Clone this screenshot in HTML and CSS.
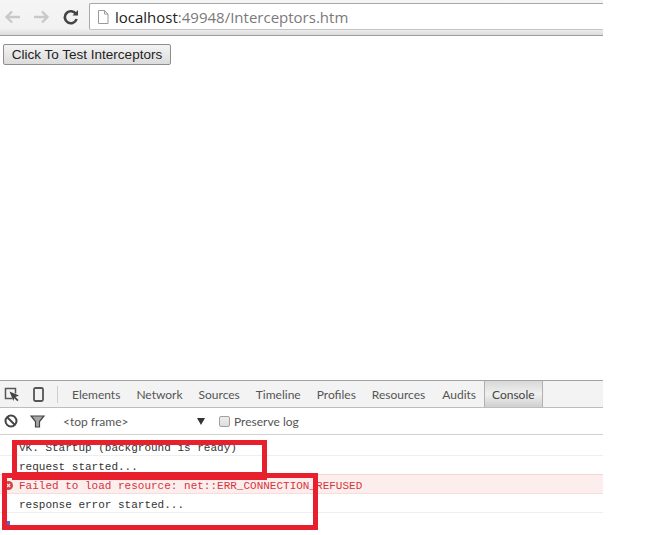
FILE: index.html
```html
<!DOCTYPE html>
<html lang="en">
<head>
<meta charset="utf-8">
<title>Interceptors</title>
<link rel="stylesheet" href="styles.css">
</head>
<body>
<div class="window">
  <header class="chrome">
    <svg class="nav" width="18" height="14" viewBox="0 0 18 14"><path d="M8 1.500 2.500 7 8 12.500M3 7h13" fill="none" stroke="#c9c9c9" stroke-width="2.400"/></svg>
    <svg class="nav" width="18" height="14" viewBox="0 0 18 14"><path d="M10 1.500 15.500 7 10 12.500M15 7H2" fill="none" stroke="#c9c9c9" stroke-width="2.400"/></svg>
    <svg class="nav reload" width="16" height="16" viewBox="0 0 16 16"><path d="M13 5.200A6 6 0 1 0 13.600 10" fill="none" stroke="#444" stroke-width="2.600"/><path d="M9.500 6.500H15V1z" fill="#444"/></svg>
    <div class="omnibox">
      <svg class="doc" width="12" height="14" viewBox="0 0 12 14"><path d="M1.500.5h6l3.500 3.500v9.500h-9.500zM7.500.5v3.500h3.500" fill="#fff" stroke="#9a9a9a"/></svg>
      <span class="url"><span class="host">localhost</span>:49948/Interceptors.htm</span>
    </div>
  </header>
  <main class="content">
    <button class="test-button" type="button">Click To Test Interceptors</button>
  </main>
  <section class="devtools">
    <div class="tabbar">
      <svg class="tool-icon" width="16" height="16" viewBox="0 0 16 16"><path d="M8 12.500H1.500v-10h10v5" fill="none" stroke="#555" stroke-width="1.500"/><path d="M5.500 5.500 15 9.500l-3.500 1.500 3 3-1.200 1.200-3-3L9.300 15z" fill="#444"/></svg>
      <svg class="tool-icon device" width="11" height="15" viewBox="0 0 11 15"><rect x="1" y="1" width="9" height="13" rx="1.500" fill="none" stroke="#555" stroke-width="1.800"/></svg>
      <span class="divider"></span>
      <nav class="tabs">
        <span class="tab">Elements</span>
        <span class="tab">Network</span>
        <span class="tab">Sources</span>
        <span class="tab">Timeline</span>
        <span class="tab">Profiles</span>
        <span class="tab">Resources</span>
        <span class="tab audits">Audits</span>
        <span class="tab active">Console</span>
      </nav>
    </div>
    <div class="filterbar">
      <svg class="clear" width="14" height="14" viewBox="0 0 14 14"><circle cx="7" cy="7" r="5.500" fill="none" stroke="#444" stroke-width="2"/><path d="M3 3l8 8" stroke="#444" stroke-width="2"/></svg>
      <svg class="filter" width="15" height="13" viewBox="0 0 15 13"><path d="M1 1h13L9.500 6.500V12h-4V6.500z" fill="#a6a6a6" stroke="#444" stroke-width="1.200"/></svg>
      <span class="frame">&lt;top frame&gt;</span>
      <span class="arrow"></span>
      <span class="check"></span>
      <span class="preserve">Preserve log</span>
    </div>
    <div class="console">
      <div class="row first">VK. Startup (background is ready)</div>
      <div class="row plain">request started...</div>
      <div class="row error">Failed to load resource: net::ERR_CONNECTION_REFUSED</div>
      <div class="row last">response error started...</div>
      <span class="prompt"></span>
    </div>
    <svg class="error-dot" width="9" height="9" viewBox="0 0 9 9"><circle cx="4.500" cy="4.500" r="4.500" fill="#d2433f"/><path d="M2.800 2.800l3.400 3.400M6.200 2.800 2.800 6.200" stroke="#fff" stroke-width="1.200"/></svg>
    <span class="mark mark-one"></span>
    <span class="mark mark-two"></span>
  </section>
</div>
</body>
</html>
```
FILE: styles.css
```css
html, body {
  margin: 0;
  padding: 0;
  background: #fff;
}
.window {
  width: 603px;
  height: 535px;
  display: flex;
  flex-direction: column;
  overflow: hidden;
}
.chrome {
  height: 36px;
  box-sizing: border-box;
  display: flex;
  align-items: center;
  padding: 0 0 2px 4px;
  background: linear-gradient(#f5f5f5, #f2f2f2 80%, #dcdcdc);
  border-bottom: 1px solid #9c9c9c;
}
.nav {
  margin-right: 10px;
  flex: none;
}
.nav + .nav + .reload {
  margin: 0 10px 0 3px;
}
.omnibox {
  flex: 1;
  height: 27px;
  box-sizing: border-box;
  display: flex;
  align-items: center;
  padding-left: 7px;
  background: #fff;
  border: 1px solid #a8a8a8;
  border-bottom-color: #c4c4c4;
  border-right: 0;
  border-radius: 2px 0 0 2px;
}
.doc {
  margin-right: 6px;
}
.url {
  font: 15px "Open Sans", sans-serif;
  color: #7a7a7a;
  white-space: nowrap;
}
.host {
  color: #222;
}
.content {
  flex: 1;
  padding: 8px 3px;
}
.test-button {
  display: block;
  width: 168px;
  height: 21px;
  padding: 0;
  font: 13.500px "Liberation Sans", sans-serif;
  color: #222;
  background: linear-gradient(#f3f3f3, #dcdcdc);
  border: 1px solid #8e8e8e;
  border-radius: 2px;
}
.devtools {
  position: relative;
  height: 155px;
  flex: none;
  border-top: 1px solid #a3a3a3;
  box-sizing: border-box;
}
.tabbar {
  height: 26px;
  display: flex;
  align-items: center;
  padding-left: 4px;
  background: #f3f3f3;
  border-bottom: 1px solid #bdbdbd;
}
.tool-icon {
  flex: none;
}
.device {
  margin-left: 13px;
}
.divider {
  width: 1px;
  height: 17px;
  margin: 0 6px 0 13px;
  background: #cfcfcf;
}
.tabs {
  display: flex;
  align-self: stretch;
  font: 12px "Lato", sans-serif;
  color: #555;
}
.tab {
  display: flex;
  align-items: center;
  padding: 0 8px;
}
.tab.audits {
  padding-left: 9px;
}
.tab.active {
  padding: 0 7px;
  background: linear-gradient(#d8d8d8, #f0f0f0 50%, #cfcfcf);
  border-left: 1px solid #b0b0b0;
  border-right: 1px solid #b0b0b0;
  color: #444;
}
.filterbar {
  height: 26px;
  display: flex;
  align-items: center;
  padding-left: 4px;
  border-bottom: 1px solid #d0d0d0;
  font: 12px "Lato", sans-serif;
  color: #555;
}
.filter {
  margin-left: 12px;
}
.frame {
  margin-left: 18px;
  width: 134px;
}
.arrow {
  width: 0;
  height: 0;
  border: 4px solid transparent;
  border-top: 7px solid #333;
  border-bottom: 0;
}
.check {
  width: 9px;
  height: 9px;
  margin-left: 14px;
  border: 1px solid #a0a0a0;
  border-radius: 2px;
  background: linear-gradient(#eee, #ddd);
}
.preserve {
  margin-left: 4px;
}
.console {
  font: 11px "Liberation Mono", monospace;
  color: #333;
}
.row {
  height: 19px;
  line-height: 23px;
  box-sizing: border-box;
  padding-left: 19px;
  white-space: nowrap;
  border-bottom: 1px solid #eeeeee;
}
.row.first {
  height: 21px;
  line-height: 27px;
}
.row.plain {
  border-bottom-color: #f7d5d5;
}
.row.error {
  background: #fdeeee;
  color: #d8343a;
  border-bottom-color: #f7dcdc;
}
.prompt {
  display: block;
  width: 3px;
  height: 4px;
  margin: 8px 0 0 7px;
  background: #4a6cd0;
}
.error-dot {
  position: absolute;
  left: 4px;
  top: 100px;
}
.mark {
  position: absolute;
  box-sizing: border-box;
  border: 5px solid #e8202e;
}
.mark-one {
  left: 12px;
  top: 59px;
  width: 255px;
  height: 40px;
  border-bottom-width: 8px;
}
.mark-two {
  left: 2px;
  top: 92px;
  width: 316px;
  height: 57px;
}
```
